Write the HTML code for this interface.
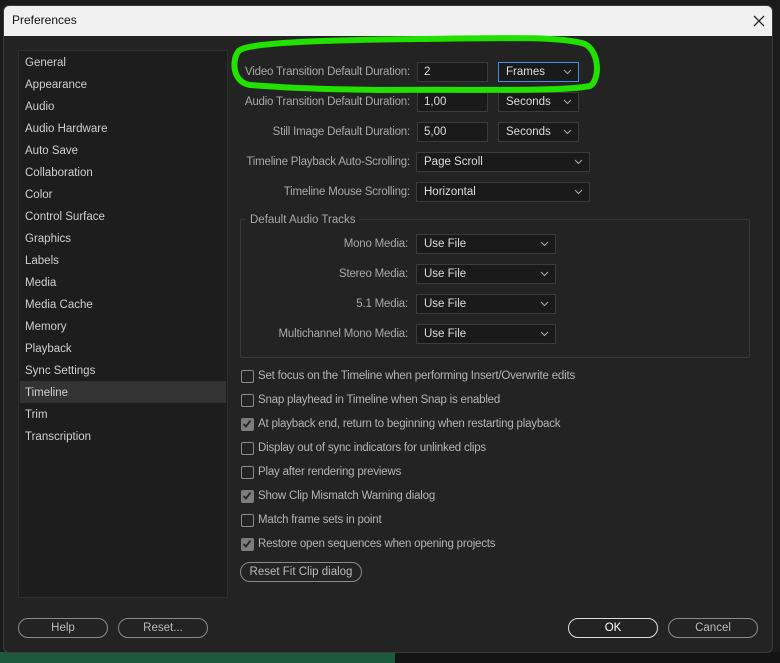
<!DOCTYPE html>
<html><head><style>
*{margin:0;padding:0;box-sizing:border-box}
body{width:780px;height:663px;background:#1b1b1b;position:relative;overflow:hidden;font-family:"Liberation Sans",sans-serif;font-size:11.5px;color:#c8c8c8;white-space:nowrap}
.a{position:absolute}
.dlg{left:3px;top:5px;width:770px;height:648px;background:#232323;border-radius:6px;overflow:hidden;border:1px solid #3a3a3a}
.tb{left:0;top:0;width:770px;height:30px;background:#f0f0f0;color:#111;font-size:12px}
.side{left:18px;top:50px;width:210px;height:548px;background:#1d1d1d;border:1px solid #2e2e2e}
.si{position:absolute;left:6px;color:#cfcfcf;line-height:22px;height:22px}
.lbl{position:absolute;text-align:right;color:#a8a8a8;line-height:21px;letter-spacing:-0.2px}
.inp{position:absolute;height:20px;background:#1a1a1a;border:1px solid #3b3b3b;color:#ddd;padding-left:6px;line-height:19px}
.dd{position:absolute;height:20px;background:#1a1a1a;border:1px solid #3b3b3b;color:#ddd;padding-left:7px;line-height:19px}
.dd svg{position:absolute;right:6px;top:6px}
.cb{position:absolute;left:241px;width:13px;height:13px;border:1.5px solid #8a8a8a;border-radius:2px}
.cb.on{background:#7d7d7d;border-color:#7d7d7d}
.ct{position:absolute;left:258px;color:#b4b4b4;line-height:17px;letter-spacing:-0.2px}
.btn{position:absolute;height:20px;border:1px solid #8a8a8a;border-radius:10px;text-align:center;line-height:19px;color:#bbb}
</style></head><body>
<div class="a" style="left:0;top:652px;width:395px;height:11px;background:#1c5a3d"></div>
<div class="a" style="left:395px;top:652px;width:385px;height:11px;background:#141414"></div>
<div class="a dlg">
 <div class="a tb"><span class="a" style="left:8px;top:7px">Preferences</span>
 <svg class="a" style="left:749px;top:9px" width="12" height="12"><path d="M1 1L11 11M11 1L1 11" stroke="#222" stroke-width="1.3"/></svg></div>
</div>
<div class="a side"></div>
<div class="a" style="left:20px;top:381px;width:206px;height:22px;background:#333"></div>
<div class="a" style="left:19px;top:52px">
<div class="si" style="top:0">General</div><div class="si" style="top:22px">Appearance</div><div class="si" style="top:44px">Audio</div><div class="si" style="top:66px">Audio Hardware</div><div class="si" style="top:88px">Auto Save</div><div class="si" style="top:110px">Collaboration</div><div class="si" style="top:132px">Color</div><div class="si" style="top:154px">Control Surface</div><div class="si" style="top:176px">Graphics</div><div class="si" style="top:198px">Labels</div><div class="si" style="top:220px">Media</div><div class="si" style="top:242px">Media Cache</div><div class="si" style="top:264px">Memory</div><div class="si" style="top:286px">Playback</div><div class="si" style="top:308px">Sync Settings</div><div class="si" style="top:330px">Timeline</div><div class="si" style="top:352px">Trim</div><div class="si" style="top:374px">Transcription</div>
</div>

<div class="lbl" style="left:130px;width:280px;top:62px">Video Transition Default Duration:</div>
<div class="lbl" style="left:130px;width:280px;top:92px">Audio Transition Default Duration:</div>
<div class="lbl" style="left:130px;width:280px;top:122px">Still Image Default Duration:</div>
<div class="lbl" style="left:130px;width:280px;top:152px">Timeline Playback Auto-Scrolling:</div>
<div class="lbl" style="left:130px;width:280px;top:182px">Timeline Mouse Scrolling:</div>
<div class="inp" style="left:417px;top:62px;width:71px">2</div>
<div class="inp" style="left:417px;top:92px;width:71px">1,00</div>
<div class="inp" style="left:417px;top:122px;width:71px">5,00</div>
<div class="dd" style="left:498px;top:62px;width:81px;border-color:#4a8ce0">Frames<svg width="9" height="6"><path d="M1 1L4.5 4.5L8 1" stroke="#aaa" fill="none"/></svg></div>
<div class="dd" style="left:498px;top:92px;width:81px">Seconds<svg width="9" height="6"><path d="M1 1L4.5 4.5L8 1" stroke="#aaa" fill="none"/></svg></div>
<div class="dd" style="left:498px;top:122px;width:81px">Seconds<svg width="9" height="6"><path d="M1 1L4.5 4.5L8 1" stroke="#aaa" fill="none"/></svg></div>
<div class="dd" style="left:416px;top:152px;width:174px">Page Scroll<svg width="9" height="6"><path d="M1 1L4.5 4.5L8 1" stroke="#aaa" fill="none"/></svg></div>
<div class="dd" style="left:416px;top:182px;width:174px">Horizontal<svg width="9" height="6"><path d="M1 1L4.5 4.5L8 1" stroke="#aaa" fill="none"/></svg></div>

<div class="a" style="left:240px;top:219px;width:510px;height:139px;border:1px solid #383838;border-radius:2px"></div>
<div class="a" style="left:246px;top:212px;padding:0 4px;background:#232323;color:#a8a8a8;line-height:17px">Default Audio Tracks</div>
<div class="lbl" style="left:150px;width:258px;top:234px">Mono Media:</div>
<div class="lbl" style="left:150px;width:258px;top:264px">Stereo Media:</div>
<div class="lbl" style="left:150px;width:258px;top:294px">5.1 Media:</div>
<div class="lbl" style="left:150px;width:258px;top:324px">Multichannel Mono Media:</div>
<div class="dd" style="left:416px;top:234px;width:140px">Use File<svg width="9" height="6"><path d="M1 1L4.5 4.5L8 1" stroke="#aaa" fill="none"/></svg></div>
<div class="dd" style="left:416px;top:264px;width:140px">Use File<svg width="9" height="6"><path d="M1 1L4.5 4.5L8 1" stroke="#aaa" fill="none"/></svg></div>
<div class="dd" style="left:416px;top:294px;width:140px">Use File<svg width="9" height="6"><path d="M1 1L4.5 4.5L8 1" stroke="#aaa" fill="none"/></svg></div>
<div class="dd" style="left:416px;top:324px;width:140px">Use File<svg width="9" height="6"><path d="M1 1L4.5 4.5L8 1" stroke="#aaa" fill="none"/></svg></div>

<div class="cb" style="top:370px"></div><div class="ct" style="top:368px">Set focus on the Timeline when performing Insert/Overwrite edits</div>
<div class="cb" style="top:394px"></div><div class="ct" style="top:392px">Snap playhead in Timeline when Snap is enabled</div>
<div class="cb on" style="top:418px"><svg width="10" height="10" style="position:absolute;left:0;top:0"><path d="M1.5 5L4 7.5L8.5 1.5" stroke="#222" stroke-width="1.8" fill="none"/></svg></div><div class="ct" style="top:416px">At playback end, return to beginning when restarting playback</div>
<div class="cb" style="top:442px"></div><div class="ct" style="top:440px">Display out of sync indicators for unlinked clips</div>
<div class="cb" style="top:466px"></div><div class="ct" style="top:464px">Play after rendering previews</div>
<div class="cb on" style="top:490px"><svg width="10" height="10" style="position:absolute;left:0;top:0"><path d="M1.5 5L4 7.5L8.5 1.5" stroke="#222" stroke-width="1.8" fill="none"/></svg></div><div class="ct" style="top:488px">Show Clip Mismatch Warning dialog</div>
<div class="cb" style="top:514px"></div><div class="ct" style="top:512px">Match frame sets in point</div>
<div class="cb on" style="top:538px"><svg width="10" height="10" style="position:absolute;left:0;top:0"><path d="M1.5 5L4 7.5L8.5 1.5" stroke="#222" stroke-width="1.8" fill="none"/></svg></div><div class="ct" style="top:536px">Restore open sequences when opening projects</div>

<div class="btn" style="left:240px;top:562px;width:122px">Reset Fit Clip dialog</div>
<div class="btn" style="left:18px;top:618px;width:90px">Help</div>
<div class="btn" style="left:118px;top:618px;width:90px">Reset...</div>
<div class="btn" style="left:568px;top:618px;width:90px;border-color:#ddd;color:#fff">OK</div>
<div class="btn" style="left:668px;top:618px;width:90px">Cancel</div>

<svg class="a" style="left:0;top:0" width="780" height="663"><path d="M238 52 C240 44 300 40 420 39 C500 38 560 36 585 44 C600 52 600 80 590 86 C560 92 470 89 380 90 C300 89 280 87 250 85 C232 82 232 60 238 52 Z" stroke="#22e000" stroke-width="6" fill="none"/></svg>
</body></html>
